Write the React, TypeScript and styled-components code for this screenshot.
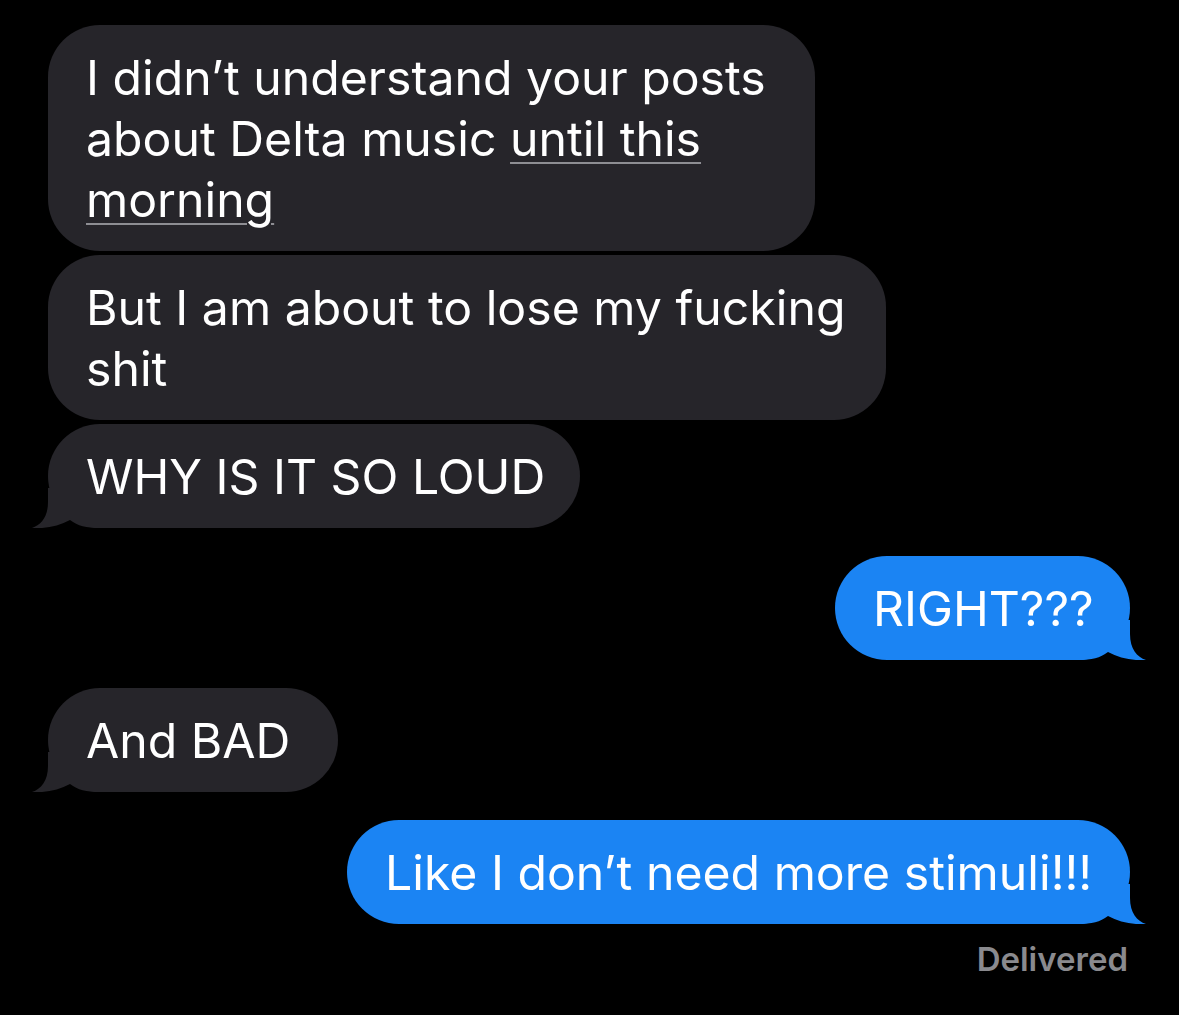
import React from "react";
import styled, { createGlobalStyle } from "styled-components";

const Global = createGlobalStyle`
  html, body { margin: 0; padding: 0; background: #000; }
  body { font-family: Inter, "Liberation Sans", Arial, sans-serif; -webkit-font-smoothing: antialiased; }
`;

const Screen = styled.div`
  width: 1179px;
  height: 1015px;
  background: #000;
  box-sizing: border-box;
  padding: 25px 49px 0 48px;
  display: flex;
  flex-direction: column;
  gap: 28px;
  overflow: hidden;
`;

const Group = styled.div<{ $side: "in" | "out" }>`
  display: flex;
  flex-direction: column;
  gap: 4px;
  align-items: ${(p) => (p.$side === "in" ? "flex-start" : "flex-end")};
`;

const Bubble = styled.div<{ $side: "in" | "out"; $w: number }>`
  position: relative;
  box-sizing: border-box;
  width: ${(p) => p.$w}px;
  padding: 21.5px 0 21.5px 38px;
  border-radius: 52px;
  background: ${(p) => (p.$side === "in" ? "#26252a" : "#1b84f3")};
  color: #fff;
  font-size: 48.2px;
  line-height: 61px;
  letter-spacing: 0;
  white-space: nowrap;
`;

const Tail = styled.svg<{ $side: "in" | "out" }>`
  position: absolute;
  bottom: 0;
  width: 70px;
  height: 40px;
  ${(p) => (p.$side === "in" ? "left: -16px;" : "right: -16px; transform: scaleX(-1);")}
`;

const Text = styled.span`
  position: relative;
`;

const Link = styled.span`
  text-decoration: underline;
  text-decoration-color: #8e8e93;
  text-decoration-thickness: 2px;
  text-underline-offset: 6px;
`;

const Status = styled.div`
  align-self: flex-end;
  margin-top: 11px;
  margin-right: 2px;
  color: #8a8a8e;
  font-size: 33px;
  font-weight: 600;
  line-height: 40px;
`;

function Msg({ side, w, tail, children }: { side: "in" | "out"; w: number; tail?: boolean; children: React.ReactNode }) {
  return (
    <Bubble $side={side} $w={w}>
      {tail && (
        <Tail $side={side} viewBox="0 0 70 40">
          <path
            d="M16 0 L16 14 C16 29 9 37 0 40 C13 41 27 38 38 32 C46 38 54 40 68 40 L68 0 Z"
            fill={side === "in" ? "#26252a" : "#1b84f3"}
          />
        </Tail>
      )}
      <Text>{children}</Text>
    </Bubble>
  );
}

export default function App() {
  return (
    <>
      <Global />
      <Screen>
        <Group $side="in">
          <Msg side="in" w={767}>
            I didn’t understand your posts
            <br />
            about Delta music <Link>until this</Link>
            <br />
            <Link>morning</Link>
          </Msg>
          <Msg side="in" w={838}>
            But I am about to lose my fucking
            <br />
            shit
          </Msg>
          <Msg side="in" w={532} tail>
            WHY IS IT SO LOUD
          </Msg>
        </Group>
        <Group $side="out">
          <Msg side="out" w={295} tail>
            RIGHT???
          </Msg>
        </Group>
        <Group $side="in">
          <Msg side="in" w={290} tail>
            And BAD
          </Msg>
        </Group>
        <Group $side="out">
          <Msg side="out" w={783} tail>
            Like I don’t need more stimuli!!!
          </Msg>
          <Status>Delivered</Status>
        </Group>
      </Screen>
    </>
  );
}
